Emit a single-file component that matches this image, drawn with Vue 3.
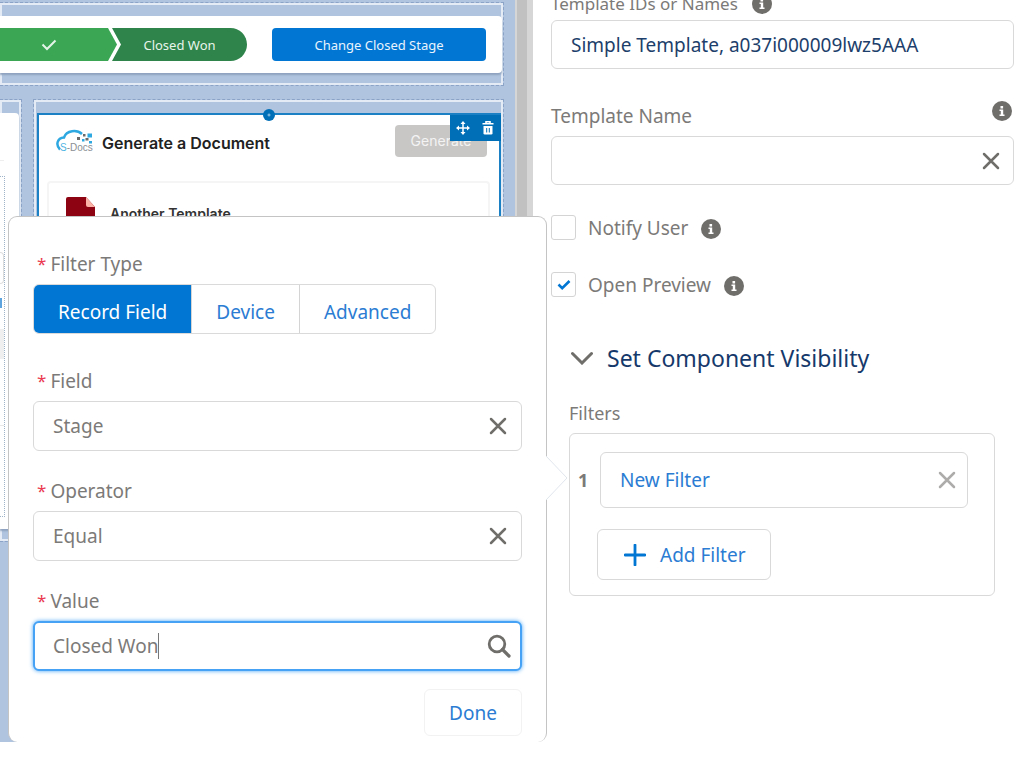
<script setup>
import { ref } from 'vue'

const templateIds = ref('Simple Template, a037i000009lwz5AAA')
const templateName = ref('')
const notifyUser = ref(false)
const openPreview = ref(true)
const filterType = ref('Record Field')
const filterTypes = ['Record Field', 'Device', 'Advanced']
const field = ref('Stage')
const operator = ref('Equal')
const value = ref('Closed Won')
</script>

<template>
  <div class="builder">
    <main class="canvas">
      <div class="regions">
        <section class="region">
          <div class="card path-card">
            <div class="path">
              <div class="step done">
                <svg width="16" height="12" viewBox="0 0 16 12" aria-label="Complete"><path d="M1.500 5.500 6 10 14.500 1.500" fill="none" stroke="#e4f5e8" stroke-width="2" /></svg>
              </div>
              <div class="step current">Closed Won</div>
            </div>
            <button class="stage-btn" type="button">Change Closed Stage</button>
          </div>
        </section>

        <div class="columns">
          <section class="region side">
            <div class="card side-card">
              <div class="side-line"></div>
              <div class="side-zone">
                <div class="side-box"></div>
                <div class="side-link"></div>
                <div class="side-shade"></div>
                <div class="side-rule"></div>
              </div>
            </div>
          </section>

          <section class="region main-region">
            <div class="selected">
              <span class="add-dot"><svg width="12" height="12" viewBox="0 0 12 12"><circle cx="6" cy="6" r="6" fill="#006fb7" /><path d="M6 4.500v3M4.500 6h3" stroke="#9cc9e8" stroke-width="1" /></svg></span>
              <header class="doc-head">
                <svg class="logo" width="38" height="24" viewBox="0 0 38 24" role="img" aria-label="S-Docs">
                  <path d="M4 20.500C-.5 16 1 9 8 8.500 10.500 1 21 .5 26 5" fill="none" stroke="#2ea8e0" stroke-width="2.500" />
                  <path d="M31.500 4.500h4.500v4h-4.500zM26 10h2.500v2.500H26zM33 12h3v2.500h-3z" fill="#2ea8e0" />
                  <path d="M21 8h3v3h-3zM27 5h2.500v2.500H27zM29.500 9h3v2.500h-3z" fill="#6a6a6a" />
                  <text x="4" y="22" font-family="Liberation Sans, sans-serif" font-size="10" fill="#8b8f94"><tspan fill="#4db4e4">S</tspan>-Docs</text>
                </svg>
                <h2>Generate a Document</h2>
                <button class="generate" type="button" disabled>Generate</button>
              </header>
              <div class="toolbar">
                <button type="button" aria-label="Move">
                  <svg width="14" height="14" viewBox="0 0 14 14"><path d="M7 2v10M2 7h10" stroke="#fff" stroke-width="1.500" /><path d="M7 0l2.500 3h-5zM7 14l2.500-3h-5zM0 7l3-2.500v5zM14 7l-3-2.500v5z" fill="#fff" /></svg>
                </button>
                <button type="button" aria-label="Delete">
                  <svg width="12" height="14" viewBox="0 0 12 14"><path d="M4 2V.8h4V2M.5 2.800h11" fill="none" stroke="#fff" stroke-width="1.600" /><path d="M1.500 5h9v7.200q0 1.300-1.300 1.300H2.800q-1.300 0-1.300-1.300z" fill="#fff" /><path d="M4.700 7v4.500M7.300 7v4.500" stroke="#006fb7" /></svg>
                </button>
              </div>
              <div class="doc-list">
                <svg width="30" height="36" viewBox="0 0 30 36"><path d="M2 0h18l9 10v26H0V2q0-2 2-2z" fill="#8e0311" /><path d="M20 0l9 10h-7q-2 0-2-2z" fill="#fbb3a8" /></svg>
                <span>Another Template</span>
              </div>
            </div>
          </section>
        </div>
      </div>
      <div class="scrollbar"></div>
    </main>

    <form class="popover" @submit.prevent>
      <svg class="nubbin" width="22" height="46" viewBox="0 0 22 46"><path d="M0 1 21 23 0 45z" fill="#fff" /><path d="M0 1 21 23 0 45" fill="none" stroke="#e0e5ec" /></svg>
      <fieldset class="types">
        <legend><i>*</i>Filter Type</legend>
        <div class="segmented">
          <button v-for="t in filterTypes" :key="t" type="button" :class="{ on: t === filterType }" @click="filterType = t">{{ t }}</button>
        </div>
      </fieldset>

      <div class="group">
        <label for="field"><i>*</i>Field</label>
        <div class="control">
          <input id="field" v-model="field" type="text" />
          <button class="clear" type="button" aria-label="Clear field" @click="field = ''"><svg width="18" height="18" viewBox="0 0 18 18"><path d="M2 2l14 14M16 2L2 16" stroke="#706e6b" stroke-width="2.500" stroke-linecap="round" /></svg></button>
        </div>
      </div>

      <div class="group">
        <label for="operator"><i>*</i>Operator</label>
        <div class="control">
          <input id="operator" v-model="operator" type="text" />
          <button class="clear" type="button" aria-label="Clear operator" @click="operator = ''"><svg width="18" height="18" viewBox="0 0 18 18"><path d="M2 2l14 14M16 2L2 16" stroke="#706e6b" stroke-width="2.500" stroke-linecap="round" /></svg></button>
        </div>
      </div>

      <div class="group">
        <label for="value"><i>*</i>Value</label>
        <div class="control active">
          <input id="value" v-model="value" class="typed" type="text" />
          <span class="caret"></span>
          <svg class="search" width="24" height="24" viewBox="0 0 24 24"><circle cx="10" cy="10" r="7.800" fill="none" stroke="#706e6b" stroke-width="2.800" /><path d="M15.500 15.500 22 22" stroke="#706e6b" stroke-width="3.200" stroke-linecap="round" /></svg>
        </div>
      </div>

      <button class="done-btn" type="submit">Done</button>
    </form>

    <aside class="panel">
      <div class="label-row first">
        <label for="ids">Template IDs or Names</label>
        <svg class="info" width="20" height="20" viewBox="0 0 20 20"><circle cx="10" cy="10" r="10" fill="#706e6b" /><path d="M8.500 5h2.600v2.400H8.500zM7.500 8.600h3.700v4.900h1.300V15h-5v-1.500h1.300v-3.400H7.500z" fill="#fff" /></svg>
      </div>
      <div class="control dark"><input id="ids" v-model="templateIds" type="text" /></div>

      <div class="label-row second">
        <label for="name">Template Name</label>
        <svg class="info" width="20" height="20" viewBox="0 0 20 20"><circle cx="10" cy="10" r="10" fill="#706e6b" /><path d="M8.500 5h2.600v2.400H8.500zM7.500 8.600h3.700v4.900h1.300V15h-5v-1.500h1.300v-3.400H7.500z" fill="#fff" /></svg>
      </div>
      <div class="control dark">
        <input id="name" v-model="templateName" type="text" />
        <button class="clear" type="button" aria-label="Clear template name" @click="templateName = ''"><svg width="18" height="18" viewBox="0 0 18 18"><path d="M2 2l14 14M16 2L2 16" stroke="#706e6b" stroke-width="2.500" stroke-linecap="round" /></svg></button>
      </div>

      <div class="checks">
        <div class="check-row">
          <span class="box"><input id="notify" v-model="notifyUser" type="checkbox" /></span>
          <label for="notify">Notify User</label>
          <svg class="info" width="20" height="20" viewBox="0 0 20 20"><circle cx="10" cy="10" r="10" fill="#706e6b" /><path d="M8.500 5h2.600v2.400H8.500zM7.500 8.600h3.700v4.900h1.300V15h-5v-1.500h1.300v-3.400H7.500z" fill="#fff" /></svg>
        </div>
        <div class="check-row">
          <span class="box"><input id="preview" v-model="openPreview" type="checkbox" /><svg v-if="openPreview" width="14" height="12" viewBox="0 0 14 12"><path d="M1.500 5.500 5.200 9.200 12.500 2" fill="none" stroke="#0176d3" stroke-width="2.600" /></svg></span>
          <label for="preview">Open Preview</label>
          <svg class="info" width="20" height="20" viewBox="0 0 20 20"><circle cx="10" cy="10" r="10" fill="#706e6b" /><path d="M8.500 5h2.600v2.400H8.500zM7.500 8.600h3.700v4.900h1.300V15h-5v-1.500h1.300v-3.400H7.500z" fill="#fff" /></svg>
        </div>
      </div>

      <section class="visibility">
        <h3>
          <svg width="22" height="14" viewBox="0 0 22 14"><path d="M1.500 2.500 11 12 20.500 2.500" fill="none" stroke="#706e6b" stroke-width="3" stroke-linecap="round" /></svg>
          Set Component Visibility
        </h3>
        <p>Filters</p>
        <div class="filters">
          <div class="filter-row">
            <b>1</b>
            <div class="filter">
              <a href="#">New Filter</a>
              <button class="remove" type="button" aria-label="Remove filter"><svg width="18" height="18" viewBox="0 0 18 18"><path d="M2 2l14 14M16 2L2 16" stroke="#aeacaa" stroke-width="2.500" stroke-linecap="round" /></svg></button>
            </div>
          </div>
          <button class="add" type="button">
            <svg width="22" height="22" viewBox="0 0 22 22"><path d="M11 1v20M1 11h20" stroke="#0176d3" stroke-width="2.800" stroke-linecap="round" /></svg>
            Add Filter
          </button>
        </div>
      </section>
    </aside>
  </div>
</template>

<style>
body {
  background: #fff;
}
</style>

<style scoped>
* {
  box-sizing: border-box;
}
.builder {
  display: grid;
  grid-template-columns: minmax(0, 533fr) minmax(0, 491fr);
  font-family: "Noto Sans", "Open Sans", sans-serif;
  font-size: 19px;
  line-height: 24px;
  color: #7c7a78;
  overflow: hidden;
}
button, input {
  font: inherit;
  color: inherit;
  margin: 0;
}
button {
  padding: 0;
  border: 0;
  background: none;
  cursor: pointer;
}
svg {
  flex: none;
  display: block;
}
.canvas {
  grid-area: 1 / 1;
  display: flex;
  background: #b0c4df;
}
.regions {
  flex: 1;
  min-width: 0;
  padding: 2px 11px 0 0;
}
.scrollbar {
  width: 18px;
  background: #c1c1c1;
  border: solid #d6d6d6;
  border-width: 0 6px 0 2px;
}
.region {
  border: 1px dashed #8ba3c7;
  box-shadow: inset 0 0 0 2px #e4ebf5;
  padding: 13px 1px 12px 0;
  border-left: 0;
}
.card {
  background: #fff;
  box-shadow: 0 2px 2px #8fa2be;
}
.path-card {
  display: flex;
  align-items: center;
  gap: 25px;
  padding: 12px 16px 12px 0;
  border-radius: 0 4px 4px 0;
  font-size: 13px;
}
.path {
  flex: 1;
  display: flex;
}
.step {
  height: 33px;
  display: flex;
  align-items: center;
  justify-content: center;
  color: #e8f4ea;
}
.done {
  flex: 1;
  padding-right: 20px;
  background: #3ba755;
  clip-path: polygon(0 0, calc(100% - 9px) 0, 100% 50%, calc(100% - 9px) 100%, 0 100%);
}
.current {
  width: 135px;
  margin-left: -5px;
  background: #2e844a;
  border-radius: 0 17px 17px 0;
  clip-path: polygon(0 0, 100% 0, 100% 100%, 0 100%, 9px 50%);
}
.stage-btn {
  width: 214px;
  height: 33px;
  border-radius: 4px;
  background: #0176d3;
  color: #e9f4fd;
}
.columns {
  display: flex;
  align-items: flex-start;
  gap: 11px;
  margin-top: 13px;
}
.side {
  width: 22px;
  padding-right: 2px;
}
.side-card {
  height: 416px;
  padding-top: 47px;
  border-radius: 0 4px 0 0;
}
.side-line {
  width: 4px;
  height: 1px;
  background: #eee;
}
.side-zone {
  width: 5px;
  height: 341px;
  margin-top: 15px;
  padding-top: 75px;
  border: 1px dotted #9fb3c8;
  border-left: 0;
}
.side-box {
  width: 4px;
  height: 32px;
  border: 1px solid #ddd;
  border-left: 0;
  border-radius: 0 4px 4px 0;
}
.side-link {
  width: 2px;
  height: 10px;
  margin-top: 14px;
  background: #5ea5e0;
}
.side-shade {
  width: 4px;
  height: 30px;
  margin-top: 21px;
  background: #efefef;
}
.side-rule {
  width: 4px;
  height: 1px;
  margin-top: 66px;
  background: #e8e8e8;
}
.main-region {
  flex: 1;
  min-width: 0;
  height: 443px;
  border-left: 1px dashed #8ba3c7;
  padding: 13px 2px 12px 3px;
}
.selected {
  position: relative;
  height: 100%;
  background: #fff;
  border: 2px solid #1b80c4;
  padding: 10px 9px 0 8px;
  font-family: Inter, Roboto, sans-serif;
}
.add-dot {
  position: absolute;
  top: -6px;
  left: 50%;
  transform: translateX(-50%);
}
.doc-head {
  display: flex;
  align-items: center;
  padding: 0 3px 0 9px;
}
.doc-head h2 {
  flex: 1;
  margin: 4px 0 0 8px;
  font-size: 16px;
  font-weight: 600;
  color: #222;
}
.generate {
  width: 92px;
  height: 32px;
  border-radius: 4px;
  background: #c9c7c5;
  color: #f3f3f3;
  font-size: 14px;
}
.toolbar {
  position: absolute;
  top: 0;
  right: -2px;
  display: flex;
  align-items: center;
  justify-content: space-between;
  width: 51px;
  height: 26px;
  padding: 0 7px 0 6px;
  background: #006fb7;
}
.doc-list {
  display: flex;
  gap: 14px;
  height: 120px;
  margin-top: 24px;
  padding: 14px 17px;
  border: 2px solid #f5f5f5;
  border-radius: 4px;
  font-size: 14px;
  font-weight: 600;
  line-height: 34px;
  color: #333;
}
.popover {
  grid-area: 1 / 1;
  position: relative;
  z-index: 2;
  display: flex;
  flex-direction: column;
  margin: 216px -14px 0 8px;
  padding: 35px 24px 6px 24px;
  background: #fff;
  border: 1px solid #c4c4c4;
  border-bottom: 0;
  border-radius: 9px;
}
.nubbin {
  position: absolute;
  right: -22px;
  top: 238px;
}
.types {
  margin: 0 0 35px;
  padding: 0;
  border: 0;
}
legend, .group label {
  display: flex;
  padding: 0 0 8px 4px;
}
i {
  margin-right: 4px;
  font-style: normal;
  font-size: 17px;
  color: #ea3a50;
}
.segmented {
  display: inline-flex;
  border: 1px solid #dadada;
  border-radius: 6px;
  overflow: hidden;
  vertical-align: top;
}
.segmented button {
  height: 48px;
  padding: 6px 24px 0;
  color: #2b7cd3;
}
.segmented button + button {
  border-left: 1px solid #d4d4d4;
}
.segmented .on {
  background: #0176d3;
  color: #fff;
}
.group {
  margin-bottom: 28px;
}
.control {
  display: flex;
  align-items: center;
  height: 49px;
  padding: 0 14px 0 19px;
  border: 1px solid #d9d9d9;
  border-radius: 6px;
  background: #fff;
}
.popover .control {
  height: 50px;
}
.control input {
  flex: 1;
  min-width: 0;
  padding: 0;
  border: 0;
  outline: 0;
  background: none;
}
.dark {
  color: #1d3f6b;
}
.control.dark {
  padding-right: 13px;
}
.control .typed {
  flex: none;
  field-sizing: content;
  caret-color: transparent;
}
.caret {
  width: 1px;
  height: 26px;
  background: #777;
}
.search {
  margin-left: auto;
  margin-right: -5px;
}
.popover .active {
  border: 2px solid #45a2f5;
  box-shadow: 0 0 4px #4aa5f5;
  padding-left: 18px;
}
.group:has(.active) {
  margin-bottom: 18px;
}
.done-btn {
  align-self: flex-end;
  width: 98px;
  height: 47px;
  border: 1px solid #f2f2f2;
  border-radius: 6px;
  color: #2b7cd3;
}
.panel {
  grid-area: 1 / 2;
  padding: 0 10px 0 18px;
}
.label-row {
  display: flex;
  align-items: center;
}
.first {
  gap: 14px;
  margin: -8px 0 4px;
  font-size: 17px;
}
.second {
  justify-content: space-between;
  align-items: flex-start;
  padding: 0 2px 8px 0;
  margin-top: 35px;
}
.second .info {
  margin-top: -3px;
}
.checks {
  display: grid;
  gap: 32px;
  margin-top: 30px;
}
.check-row {
  display: flex;
  align-items: center;
}
.check-row .info {
  margin: 2px 0 0 13px;
}
.check-row label {
  margin: 1px 0 0 12px;
}
.box {
  display: grid;
  place-items: center;
}
.box > * {
  grid-area: 1 / 1;
}
.box svg {
  pointer-events: none;
}
.box input {
  appearance: none;
  width: 25px;
  height: 25px;
  border: 1px solid #d4d4d4;
  border-radius: 3px;
}
.visibility {
  margin: 45px 19px 0 18px;
}
h3 {
  display: flex;
  align-items: center;
  gap: 14px;
  margin: 0;
  padding-left: 2px;
  font-size: 23px;
  font-weight: 400;
  line-height: 32px;
  color: #16396b;
}
.visibility p {
  margin: 27px 0 8px;
  font-size: 18px;
}
.filters {
  padding: 18px 26px 15px 8px;
  border: 1px solid #d9d9d9;
  border-radius: 6px;
}
.filter-row {
  display: flex;
  align-items: center;
  gap: 12px;
}
.filter-row b {
  width: 10px;
  font-size: 18px;
}
.filter {
  flex: 1;
  display: flex;
  align-items: center;
  justify-content: space-between;
  height: 56px;
  padding: 0 11px 0 19px;
  border: 1px solid #d9d9d9;
  border-radius: 6px;
}
.filter a {
  color: #2b7cd3;
  text-decoration: none;
}
.add {
  display: flex;
  align-items: center;
  gap: 14px;
  height: 51px;
  margin: 21px 0 0 19px;
  padding: 0 24px 0 26px;
  border: 1px solid #d9d9d9;
  border-radius: 6px;
  color: #2b7cd3;
}
</style>
